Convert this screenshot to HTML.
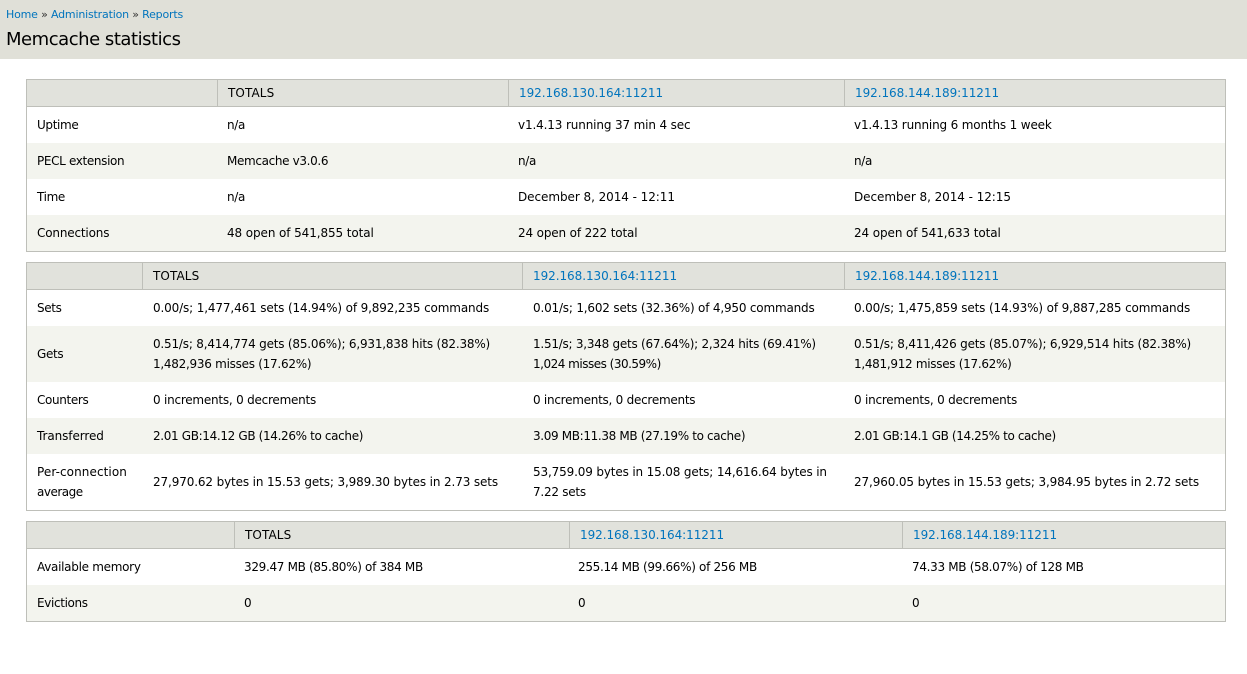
<!DOCTYPE html>
<html>
<head>
<meta charset="utf-8">
<title>Memcache statistics</title>
<style>
html,body{margin:0;padding:0;background:#fff;width:1247px;height:674px;overflow:hidden}
body{font-family:"DejaVu Sans","Liberation Sans",sans-serif;font-size:12px;color:#000}
.top{position:absolute;left:0;top:0;width:1247px;height:59px;background:#e0e0d8}
.bc{position:absolute;left:6px;top:7px;font-size:11px;line-height:15px;letter-spacing:-.18px;white-space:nowrap;color:#333}
a{color:#0074bd;text-decoration:none}
h1{position:absolute;left:6px;top:28px;margin:0;font-size:18px;line-height:23px;font-weight:normal;white-space:nowrap;letter-spacing:-.47px}
.w{position:absolute;left:26px;width:1198px;border:1px solid #bebfb9}
table{border-collapse:separate;border-spacing:0;table-layout:fixed;width:1198px}
th{padding:0 10px 1px;background:#e1e2dc;border-bottom:1px solid #bebfb9;border-left:1px solid #bebfb9;text-align:left;font-weight:normal;box-sizing:border-box;height:27px;letter-spacing:-.06px;white-space:nowrap}
th:first-child{border-left:0}
th.o{letter-spacing:.1px}
td{padding:0 0 0 10px;line-height:20px;height:36px;box-sizing:border-box;letter-spacing:-.35px;vertical-align:middle;white-space:nowrap}
tr.e td{background:#f3f4ee}
td.t{height:56px}
td.p{padding-left:11px}
</style>
</head>
<body>
<div class="top"></div>
<div class="bc"><a href="#">Home</a> » <a href="#">Administration</a> » <a href="#">Reports</a></div>
<h1>Memcache statistics</h1>

<div class="w" style="top:79px">
<table>
<colgroup><col style="width:190px"><col style="width:291px"><col style="width:336px"><col style="width:381px"></colgroup>
<tr><th></th><th class="o">TOTALS</th><th><a href="#">192.168.130.164:11211</a></th><th><a href="#">192.168.144.189:11211</a></th></tr>
<tr><td>Uptime</td><td>n/a</td><td style="letter-spacing:-.14px">v1.4.13 running 37 min 4 sec</td><td style="letter-spacing:-.16px">v1.4.13 running 6 months 1 week</td></tr>
<tr class="e"><td>PECL extension</td><td>Memcache v3.0.6</td><td>n/a</td><td>n/a</td></tr>
<tr><td>Time</td><td>n/a</td><td style="letter-spacing:-.06px">December 8, 2014 - 12:11</td><td style="letter-spacing:-.06px">December 8, 2014 - 12:15</td></tr>
<tr class="e"><td style="letter-spacing:-.17px">Connections</td><td style="letter-spacing:-.1px">48 open of 541,855 total</td><td style="letter-spacing:-.15px">24 open of 222 total</td><td style="letter-spacing:-.1px">24 open of 541,633 total</td></tr>
</table>
</div>

<div class="w" style="top:262px">
<table>
<colgroup><col style="width:115px"><col style="width:380px"><col style="width:322px"><col style="width:381px"></colgroup>
<tr><th></th><th class="o">TOTALS</th><th><a href="#">192.168.130.164:11211</a></th><th><a href="#">192.168.144.189:11211</a></th></tr>
<tr><td>Sets</td><td class="p" style="letter-spacing:-.14px">0.00/s; 1,477,461 sets (14.94%) of 9,892,235 commands</td><td class="p" style="letter-spacing:-.19px">0.01/s; 1,602 sets (32.36%) of 4,950 commands</td><td style="letter-spacing:-.14px">0.00/s; 1,475,859 sets (14.93%) of 9,887,285 commands</td></tr>
<tr class="e"><td class="t">Gets</td><td class="t p"><span style="letter-spacing:-.2px">0.51/s; 8,414,774 gets (85.06%); 6,931,838 hits (82.38%)</span><br><span style="letter-spacing:-.27px">1,482,936 misses (17.62%)</span></td><td class="t p"><span style="letter-spacing:-.25px">1.51/s; 3,348 gets (67.64%); 2,324 hits (69.41%)</span><br><span style="letter-spacing:-.5px">1,024 misses (30.59%)</span></td><td class="t"><span style="letter-spacing:-.2px">0.51/s; 8,411,426 gets (85.07%); 6,929,514 hits (82.38%)</span><br><span style="letter-spacing:-.3px">1,481,912 misses (17.62%)</span></td></tr>
<tr><td>Counters</td><td class="p" style="letter-spacing:-.23px">0 increments, 0 decrements</td><td class="p" style="letter-spacing:-.26px">0 increments, 0 decrements</td><td style="letter-spacing:-.23px">0 increments, 0 decrements</td></tr>
<tr class="e"><td style="letter-spacing:-.08px">Transferred</td><td class="p">2.01 GB:14.12 GB (14.26% to cache)</td><td class="p">3.09 MB:11.38 MB (27.19% to cache)</td><td style="letter-spacing:-.38px">2.01 GB:14.1 GB (14.25% to cache)</td></tr>
<tr><td class="t"><span style="letter-spacing:.08px">Per-connection</span><br><span style="letter-spacing:-.5px">average</span></td><td class="t p" style="letter-spacing:-.13px">27,970.62 bytes in 15.53 gets; 3,989.30 bytes in 2.73 sets</td><td class="t p"><span style="letter-spacing:-.15px">53,759.09 bytes in 15.08 gets; 14,616.64 bytes in</span><br><span style="letter-spacing:-.25px">7.22 sets</span></td><td class="t" style="letter-spacing:-.13px">27,960.05 bytes in 15.53 gets; 3,984.95 bytes in 2.72 sets</td></tr>
</table>
</div>

<div class="w" style="top:521px">
<table>
<colgroup><col style="width:207px"><col style="width:335px"><col style="width:333px"><col style="width:323px"></colgroup>
<tr><th></th><th class="o">TOTALS</th><th><a href="#">192.168.130.164:11211</a></th><th><a href="#">192.168.144.189:11211</a></th></tr>
<tr><td style="letter-spacing:-.29px">Available memory</td><td style="letter-spacing:-.32px">329.47 MB (85.80%) of 384 MB</td><td style="letter-spacing:-.32px;padding-left:9px">255.14 MB (99.66%) of 256 MB</td><td style="letter-spacing:-.32px">74.33 MB (58.07%) of 128 MB</td></tr>
<tr class="e"><td>Evictions</td><td>0</td><td style="padding-left:9px">0</td><td>0</td></tr>
</table>
</div>
</body>
</html>
